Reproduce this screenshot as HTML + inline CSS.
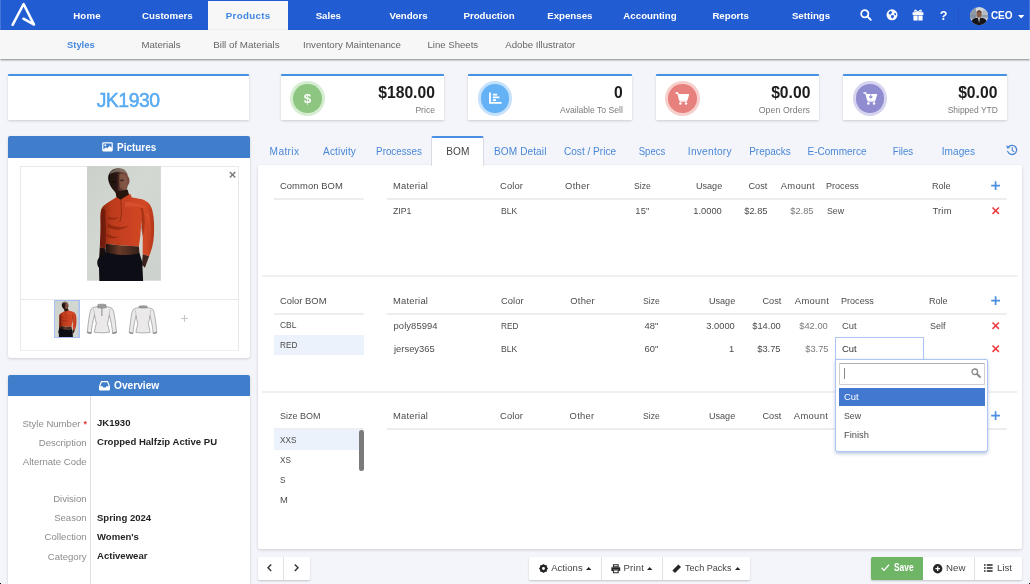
<!DOCTYPE html>
<html lang="en">
<head>
<meta charset="utf-8">
<title>JK1930 - Styles</title>
<style>
*{box-sizing:border-box;margin:0;padding:0}
html,body{width:1030px;height:584px;overflow:hidden}
body{position:relative;background:#f3f5fa;font-family:"Liberation Sans",Arial,Helvetica,sans-serif;font-size:9.6px;color:#444}
.t{position:absolute;white-space:nowrap;line-height:14px;height:14px}
.abs{position:absolute}
#nav{position:absolute;left:0;top:0;width:1030px;height:30px;background:#225cd2}
#subnav{position:absolute;left:0;top:30px;width:1030px;height:29px;background:#f7f7f7;box-shadow:0 1px 2px rgba(0,0,0,.46)}
#navtab{position:absolute;left:207.6px;top:0.8px;width:80.4px;height:29.4px;background:#f7f7f7}
.card{position:absolute;top:74px;height:46.2px;background:#fff;border-top:2px solid #4591e2;box-shadow:0 1px 2.500px rgba(0,0,0,.17);border-radius:1px}
.panel{position:absolute;background:#fff;box-shadow:0 1px 3px rgba(0,0,0,.16);border-radius:3px}
.phead{position:absolute;left:0;top:0;width:100%;background:#407dca;border-radius:3px 3px 0 0}
.hl{position:absolute}
.btn{position:absolute;top:556.6px;height:23.2px;background:#fff;box-shadow:0 1px 2px rgba(0,0,0,.2);border-radius:1.5px}
.vsep{position:absolute;top:0;width:1px;height:100%;background:#e2e2e2}
svg{position:absolute;overflow:visible}
#page{position:absolute;left:0;top:0;width:1030px;height:584px;filter:blur(0.5px)}
</style>
</head>
<body>
<div id="page">

<div id="nav">
<div id="navtab"></div>
<svg style="left:10px;top:2px" width="27" height="26" viewBox="0 0 27 26"><path d="M2.600 22.800 L13.600 2 L24 22.600 L13.400 16.700" fill="none" stroke="#fff" stroke-width="2.500" stroke-linecap="round" stroke-linejoin="round"/></svg>
<span class="t" style="top:9.40px;font-size:9.7px;color:#fff;font-weight:700;letter-spacing:0.2px;left:-13.00px;width:200px;text-align:center;">Home</span>
<span class="t" style="top:9.40px;font-size:9.7px;color:#fff;font-weight:700;left:67.40px;width:200px;text-align:center;">Customers</span>
<span class="t" style="top:9.40px;font-size:9.7px;color:#3f86df;font-weight:700;letter-spacing:0.35px;left:148.18px;width:200px;text-align:center;">Products</span>
<span class="t" style="top:9.40px;font-size:9.7px;color:#fff;font-weight:700;left:228.30px;width:200px;text-align:center;">Sales</span>
<span class="t" style="top:9.40px;font-size:9.7px;color:#fff;font-weight:700;left:308.60px;width:200px;text-align:center;">Vendors</span>
<span class="t" style="top:9.40px;font-size:9.7px;color:#fff;font-weight:700;left:389.00px;width:200px;text-align:center;">Production</span>
<span class="t" style="top:9.40px;font-size:9.7px;color:#fff;font-weight:700;left:469.80px;width:200px;text-align:center;">Expenses</span>
<span class="t" style="top:9.40px;font-size:9.7px;color:#fff;font-weight:700;left:550.00px;width:200px;text-align:center;">Accounting</span>
<span class="t" style="top:9.40px;font-size:9.7px;color:#fff;font-weight:700;left:630.70px;width:200px;text-align:center;">Reports</span>
<span class="t" style="top:9.40px;font-size:9.7px;color:#fff;font-weight:700;left:711.00px;width:200px;text-align:center;">Settings</span>
<svg style="left:860px;top:9.200px" width="12" height="12" viewBox="0 0 12 12"><circle cx="4.800" cy="4.800" r="3.600" fill="none" stroke="#fff" stroke-width="1.800"/><path d="M7.500 7.500 L10.800 10.800" stroke="#fff" stroke-width="1.800" stroke-linecap="round"/></svg>
<svg style="left:886px;top:8.600px" width="12" height="12" viewBox="0 0 12 12"><circle cx="6" cy="5.800" r="5.500" fill="#fff"/><path d="M2.600 3.400 L4.800 1.800 L6.200 3.200 L4.800 5.400 L3 5.600 Z M5 6.400 L7.600 6 L8 7.800 L6.400 9.800 L5 8.200 Z M8.400 3.800 L10.200 4.400 L10 6.400 L8.400 5.800 Z" fill="#225cd2"/></svg>
<svg style="left:912px;top:8.700px" width="12" height="12" viewBox="0 0 12 12"><path d="M0.600 3.200 H11.400 V6 H0.600 Z M1.400 6.600 H10.600 V11.600 H1.400 Z" fill="#fff"/><path d="M6 3.400 C4.600 0.200 1.800 0.600 2.600 2.600 C3 3.400 4.600 3.400 6 3.400 C7.400 3.400 9 3.400 9.400 2.600 C10.200 0.600 7.400 0.200 6 3.400 Z" fill="#fff" stroke="#fff" stroke-width="0.800"/><circle cx="4" cy="2.300" r="0.550" fill="#225cd2"/><circle cx="8" cy="2.300" r="0.550" fill="#225cd2"/><path d="M6 6.200 V11.600" stroke="#225cd2" stroke-width="0.900" opacity="0.800"/></svg>
<span class="t" style="top:9.00px;font-size:12.5px;color:#fff;font-weight:700;left:843.50px;width:200px;text-align:center;">?</span>
<div class="abs" style="left:958.3px;top:7px;width:1px;height:17px;background:#2054c6"></div>
<svg style="left:969.800px;top:6.800px" width="18.200" height="18.200" viewBox="0 0 18.4 18.4"><defs><clipPath id="av"><circle cx="9.200" cy="9.200" r="9.200"/></clipPath></defs><g clip-path="url(#av)"><rect width="18.400" height="18.400" fill="#d3d8de"/><rect x="0" y="0" width="6" height="12" fill="#8e99a8"/><rect x="12.600" y="3" width="5.800" height="9" fill="#b4bcc6"/><rect x="0" y="8" width="18.400" height="2.500" fill="#7d8896" opacity="0.600"/><path d="M0.500 18.400 C0.500 12.600 4 10.800 9.200 10.800 C14.400 10.800 17.900 12.600 17.900 18.400 Z" fill="#17171b"/><path d="M8 11.200 L9.200 16 L10.400 11.200 Z" fill="#cfcfd4"/><path d="M8.900 12 L9.200 16.500 L9.500 12 Z" fill="#333"/><ellipse cx="9.200" cy="6.900" rx="2.700" ry="3.600" fill="#8a5c46"/><path d="M6.500 6 C6.500 2.600 11.900 2.600 11.900 6 C11 4.700 7.400 4.700 6.500 6 Z" fill="#5a4238"/></g></svg>
<span class="t" style="top:9.00px;font-size:10px;color:#fff;font-weight:700;left:990.90px;">CEO</span>
<svg style="left:1017.700px;top:14.600px" width="6.400" height="3.600" viewBox="0 0 6.4 3.6"><path d="M0 0 H6.400 L3.200 3.600 Z" fill="#fff"/></svg>
</div>
<div id="subnav"></div>
<span class="t" style="top:38.20px;font-size:9.4px;color:#4488dc;font-weight:700;left:-19.20px;width:200px;text-align:center;">Styles</span>
<span class="t" style="top:38.20px;font-size:9.6px;color:#676767;left:61.00px;width:200px;text-align:center;">Materials</span>
<span class="t" style="top:38.20px;font-size:9.8px;color:#676767;left:146.40px;width:200px;text-align:center;">Bill of Materials</span>
<span class="t" style="top:38.20px;font-size:9.7px;color:#676767;left:252.00px;width:200px;text-align:center;">Inventory Maintenance</span>
<span class="t" style="top:38.20px;font-size:9.6px;color:#676767;left:352.80px;width:200px;text-align:center;">Line Sheets</span>
<span class="t" style="top:38.20px;font-size:9.6px;color:#676767;left:440.30px;width:200px;text-align:center;">Adobe Illustrator</span>
<div class="card" style="left:8.2px;width:241px"></div>
<span class="t" style="top:88.10px;font-size:19.4px;color:#58aaf2;line-height:24px;height:24px;letter-spacing:-0.45px;left:28.18px;width:200px;text-align:center;-webkit-text-stroke:0.5px #58aaf2;">JK1930</span>
<div class="card" style="left:280.8px;width:163.500px"></div>
<div class="abs" style="left:290.20px;top:81.30px;width:34.600px;height:34.600px;border-radius:50%;background:#d6edd2"></div>
<div class="abs" style="left:293.20px;top:84.30px;width:28.600px;height:28.600px;border-radius:50%;background:#8cc680"></div>
<span class="t" style="top:91.60px;font-size:13.5px;color:#fff;font-weight:700;left:207.50px;width:200px;text-align:center;">$</span>
<span class="t" style="top:82.90px;font-size:15.76px;color:#1c1c1c;line-height:20px;height:20px;font-weight:700;transform:scaleX(0.9963);transform-origin:100% 50%;right:595.00px;">$180.00</span>
<span class="t" style="top:102.70px;font-size:8.76px;color:#7a7a7a;transform:scaleX(0.9796);transform-origin:100% 50%;right:595.00px;">Price</span>
<div class="card" style="left:468.3px;width:163.500px"></div>
<div class="abs" style="left:477.70px;top:81.30px;width:34.600px;height:34.600px;border-radius:50%;background:#c5e1fc"></div>
<div class="abs" style="left:480.70px;top:84.30px;width:28.600px;height:28.600px;border-radius:50%;background:#64b1f5"></div>
<svg style="left:488.60px;top:92.40px" width="13" height="12" viewBox="0 0 13 12"><path d="M1 0.400 V10.800 H12.600" fill="none" stroke="#fff" stroke-width="1.800"/><path d="M3.800 2.600 H8.200 M3.800 5.400 H10.400 M3.800 8.100 H7" stroke="#fff" stroke-width="1.800"/></svg>
<span class="t" style="top:82.90px;font-size:15.76px;color:#1c1c1c;line-height:20px;height:20px;font-weight:700;transform:scaleX(0.9963);transform-origin:100% 50%;right:407.50px;">0</span>
<span class="t" style="top:102.70px;font-size:8.76px;color:#7a7a7a;transform:scaleX(0.9836);transform-origin:100% 50%;right:407.50px;">Available To Sell</span>
<div class="card" style="left:655.8px;width:163.500px"></div>
<div class="abs" style="left:665.20px;top:81.30px;width:34.600px;height:34.600px;border-radius:50%;background:#f7d0ce"></div>
<div class="abs" style="left:668.20px;top:84.30px;width:28.600px;height:28.600px;border-radius:50%;background:#e7817e"></div>
<svg style="left:675.10px;top:92.00px" width="14.500" height="13" viewBox="0 0 14.5 13"><path d="M0.400 0.900 H2.800 L4.600 8.200 H11.800 L13.600 2.600 H3.400" fill="#fff" stroke="#fff" stroke-width="1.200" stroke-linejoin="round"/><path d="M4.800 9.200 H12" stroke="#fff" stroke-width="1"/><circle cx="5.400" cy="11.400" r="1.250" fill="#fff"/><circle cx="11" cy="11.400" r="1.250" fill="#fff"/></svg>
<span class="t" style="top:82.90px;font-size:15.76px;color:#1c1c1c;line-height:20px;height:20px;font-weight:700;transform:scaleX(0.9963);transform-origin:100% 50%;right:220.00px;">$0.00</span>
<span class="t" style="top:102.70px;font-size:8.76px;color:#7a7a7a;letter-spacing:0.073px;right:219.93px;">Open Orders</span>
<div class="card" style="left:843.2px;width:163.500px"></div>
<div class="abs" style="left:852.60px;top:81.30px;width:34.600px;height:34.600px;border-radius:50%;background:#d6d4ee"></div>
<div class="abs" style="left:855.60px;top:84.30px;width:28.600px;height:28.600px;border-radius:50%;background:#908cd0"></div>
<svg style="left:862.50px;top:92.00px" width="14.500" height="13" viewBox="0 0 14.5 13"><path d="M0.400 0.900 H2.800 L4.600 8.200 H11.800 L13.600 2.600 H3.400" fill="#fff" stroke="#fff" stroke-width="1.200" stroke-linejoin="round"/><path d="M4.800 9.200 H12" stroke="#fff" stroke-width="1"/><circle cx="5.400" cy="11.400" r="1.250" fill="#fff"/><circle cx="11" cy="11.400" r="1.250" fill="#fff"/><path d="M7.800 2.400 V5.600 M6.200 4.400 L7.800 6 L9.400 4.400" stroke="#908cd0" stroke-width="1.100" fill="none"/></svg>
<span class="t" style="top:82.90px;font-size:15.76px;color:#1c1c1c;line-height:20px;height:20px;font-weight:700;transform:scaleX(0.9963);transform-origin:100% 50%;right:32.60px;">$0.00</span>
<span class="t" style="top:102.70px;font-size:8.76px;color:#7a7a7a;transform:scaleX(0.9682);transform-origin:100% 50%;right:32.60px;">Shipped YTD</span><div class="panel" style="left:8px;top:136.400px;width:242px;height:222px">
<div class="phead" style="height:21.500px;border-radius:2px 2px 0 0"></div>
<div class="abs" style="left:12px;top:29.600px;width:218.600px;height:184.600px;border:1px solid #e9e9e9;border-bottom-color:#f0f0f0;background:#fff"></div>
<div class="abs" style="left:12px;top:162.900px;width:218.600px;height:1px;background:#e9e9e9"></div>
</div>
<svg style="left:101.500px;top:141.800px" width="11" height="9.600" viewBox="0 0 11 9.6"><rect x="0.200" y="0.200" width="10.600" height="9.200" rx="1.300" fill="#fff"/><path d="M1.400 1.400 H9.600 V5.800 L7.600 3.800 L5.200 6.400 L4 5.200 L1.400 7.600 Z" fill="#407dca"/><circle cx="3.300" cy="3.200" r="0.950" fill="#fff"/></svg>
<span class="t" style="top:140.00px;font-size:11.3px;color:#fff;font-weight:700;left:116.90px;transform:scaleX(0.880);transform-origin:0 50%;">Pictures</span>
<span class="t" style="top:167.60px;font-size:13px;color:#7b7b7b;font-weight:700;left:132.60px;width:200px;text-align:center;">×</span>
<svg style="left:87.100px;top:166.200px;overflow:hidden" width="73.900" height="114.700" viewBox="0 0 74 115" preserveAspectRatio="none" overflow="hidden"><defs>
<linearGradient id="bga" x1="0" y1="0" x2="1" y2="1"><stop offset="0" stop-color="#cbd0cb"/><stop offset="0.45" stop-color="#d4d8d3"/><stop offset="1" stop-color="#cdd1cd"/></linearGradient>
<linearGradient id="tpa" x1="0" y1="0" x2="1" y2="0"><stop offset="0" stop-color="#86230b"/><stop offset="0.22" stop-color="#bd3b1d"/><stop offset="0.6" stop-color="#cd4323"/><stop offset="0.85" stop-color="#d24826"/><stop offset="1" stop-color="#b33516"/></linearGradient>
<linearGradient id="fca" x1="0" y1="0" x2="1" y2="0"><stop offset="0" stop-color="#1a100d"/><stop offset="0.4" stop-color="#2a1813"/><stop offset="0.62" stop-color="#6a4234"/><stop offset="1" stop-color="#7a4e3f"/></linearGradient>
<linearGradient id="mda" x1="0" y1="0" x2="1" y2="0"><stop offset="0" stop-color="#1d110d"/><stop offset="0.4" stop-color="#6a3a28"/><stop offset="1" stop-color="#33201a"/></linearGradient>
<filter id="bla" x="-10%" y="-10%" width="120%" height="120%"><feGaussianBlur stdDeviation="0.600"/></filter>
</defs>
<rect width="74" height="115" fill="url(#bga)"/>
<g filter="url(#bla)">
<path d="M21.200 13 C20.800 7 25 2.200 31.500 2.200 C37 2.200 40.500 5.500 41 10.500 C42.500 11.500 43 14.500 42.300 17 C41.800 18.500 41.200 19 40.800 19.200 C40.500 23 38 27 35 28.500 C33 29.500 31 29 29 27 C25.500 23.500 21.800 18.500 21.200 13 Z" fill="url(#fca)"/>
<path d="M22.500 8.500 C24 4.500 27.500 2.400 31.500 2.400 C35.500 2.400 39 4.500 40.200 8 C36 5 28 5.200 22.500 8.500 Z" fill="#8f8379" opacity="0.700"/>
<path d="M32.500 8.500 C35.500 7.200 39 8.500 40 12 C40.800 16 40 22 37.500 25.500 C35.800 27.200 34.200 27 33.400 25 C32.600 21 31.800 14 32.500 8.500 Z" fill="#946450" opacity="0.550"/>
<ellipse cx="26.800" cy="16" rx="2" ry="1" fill="#0c0706" opacity="0.700"/><ellipse cx="35" cy="14.400" rx="1.900" ry="0.900" fill="#22130f" opacity="0.750"/>
<ellipse cx="34" cy="23.300" rx="2" ry="1" fill="#5e372e"/>
<path d="M28.500 25.500 L40.600 23.500 L42.500 30 L34 35 L29.500 31.500 Z" fill="#28160f"/>
<path d="M29.500 31 L33.500 33.800 L43.200 27.800 L45 31.700 C50 32.500 54.500 33 58 34.500 C62 36.200 64.500 40 65.600 45 C67.200 52 67.600 61 67 70 C66.600 78 64.500 85 62.200 90.600 L55.800 88.600 L55.800 70.500 C55.400 66 55 60 54.500 55 L53.400 70 L52 80.600 C42 80.400 30 79.600 19 78 L18.600 82.600 L12.800 81.400 C13.200 73 13.600 65 13.400 56 C13.200 49 13.300 44 15.500 41 C18 37.800 24 35 29.500 31 Z" fill="url(#tpa)"/>
<path d="M14.500 43 C13.800 55 14.200 68 13.200 81.400 L18.600 82.600 C19.600 70 19 55 18 43 Z" fill="#4e1203" opacity="0.500"/>
<path d="M21 57.500 C27 61.500 34 62.500 42 60 C35 65.500 26 65 20 61 Z M21 51 C25 52.500 29 52.500 32 51 C29 54.500 24 54.500 21 53 Z M20 68 C24 70.500 28 71.500 32 71 C28 73.500 23 73 20 71 Z" fill="#7a1f08" opacity="0.550"/>
<path d="M55.800 42 C58.500 51 58.500 62 55.800 70.500 L54 62 C55.300 55 55.300 48 53.500 42 Z" fill="#7a1f08" opacity="0.450"/>
<path d="M33.800 34 L34.600 47 L33 56" stroke="#8e2a10" stroke-width="0.900" fill="none"/>
<path d="M38 36 C46 36 54 38 60 42 C54 40.500 46 40 38 41 Z M59 48 C62 55 63 65 62 76 C64 66 64 55 61.500 47 Z" fill="#e5633e" opacity="0.400"/>
<path d="M19 78 C30 79.600 42 80.400 52 80.600 L52.600 88.200 C42 90.700 30 90.200 18.400 86.800 Z" fill="url(#mda)"/>
<path d="M12.800 81.400 L18.600 82.600 L18.400 91 L12 94 Z" fill="#1c100c"/>
<path d="M55.800 88.600 L62.200 90.600 L58 102 L55 99 Z" fill="#3a221a"/>
<path d="M18.400 86.200 C30 89.800 42 90.400 52.600 87.600 L55.400 96.500 L56.300 118 L12.400 118 L12 102 C9.600 99 9.600 94.500 12.400 91.500 Z" fill="#0d0e12"/>
</g></svg>
<div class="abs" style="left:54.200px;top:299.700px;width:25.400px;height:38.500px;background:#a8c1f4"></div>
<svg style="left:55.100px;top:300.600px;overflow:hidden" width="23.600" height="36.700" viewBox="0 0 74 115" preserveAspectRatio="none" overflow="hidden"><defs>
<linearGradient id="bgb" x1="0" y1="0" x2="1" y2="1"><stop offset="0" stop-color="#cbd0cb"/><stop offset="0.45" stop-color="#d4d8d3"/><stop offset="1" stop-color="#cdd1cd"/></linearGradient>
<linearGradient id="tpb" x1="0" y1="0" x2="1" y2="0"><stop offset="0" stop-color="#86230b"/><stop offset="0.22" stop-color="#bd3b1d"/><stop offset="0.6" stop-color="#cd4323"/><stop offset="0.85" stop-color="#d24826"/><stop offset="1" stop-color="#b33516"/></linearGradient>
<linearGradient id="fcb" x1="0" y1="0" x2="1" y2="0"><stop offset="0" stop-color="#1a100d"/><stop offset="0.4" stop-color="#2a1813"/><stop offset="0.62" stop-color="#6a4234"/><stop offset="1" stop-color="#7a4e3f"/></linearGradient>
<linearGradient id="mdb" x1="0" y1="0" x2="1" y2="0"><stop offset="0" stop-color="#1d110d"/><stop offset="0.4" stop-color="#6a3a28"/><stop offset="1" stop-color="#33201a"/></linearGradient>
<filter id="blb" x="-10%" y="-10%" width="120%" height="120%"><feGaussianBlur stdDeviation="0.600"/></filter>
</defs>
<rect width="74" height="115" fill="url(#bgb)"/>
<g filter="url(#blb)">
<path d="M21.200 13 C20.800 7 25 2.200 31.500 2.200 C37 2.200 40.500 5.500 41 10.500 C42.500 11.500 43 14.500 42.300 17 C41.800 18.500 41.200 19 40.800 19.200 C40.500 23 38 27 35 28.500 C33 29.500 31 29 29 27 C25.500 23.500 21.800 18.500 21.200 13 Z" fill="url(#fcb)"/>
<path d="M22.500 8.500 C24 4.500 27.500 2.400 31.500 2.400 C35.500 2.400 39 4.500 40.200 8 C36 5 28 5.200 22.500 8.500 Z" fill="#8f8379" opacity="0.700"/>
<path d="M32.500 8.500 C35.500 7.200 39 8.500 40 12 C40.800 16 40 22 37.500 25.500 C35.800 27.200 34.200 27 33.400 25 C32.600 21 31.800 14 32.500 8.500 Z" fill="#946450" opacity="0.550"/>
<ellipse cx="26.800" cy="16" rx="2" ry="1" fill="#0c0706" opacity="0.700"/><ellipse cx="35" cy="14.400" rx="1.900" ry="0.900" fill="#22130f" opacity="0.750"/>
<ellipse cx="34" cy="23.300" rx="2" ry="1" fill="#5e372e"/>
<path d="M28.500 25.500 L40.600 23.500 L42.500 30 L34 35 L29.500 31.500 Z" fill="#28160f"/>
<path d="M29.500 31 L33.500 33.800 L43.200 27.800 L45 31.700 C50 32.500 54.500 33 58 34.500 C62 36.200 64.500 40 65.600 45 C67.200 52 67.600 61 67 70 C66.600 78 64.500 85 62.200 90.600 L55.800 88.600 L55.800 70.500 C55.400 66 55 60 54.500 55 L53.400 70 L52 80.600 C42 80.400 30 79.600 19 78 L18.600 82.600 L12.800 81.400 C13.200 73 13.600 65 13.400 56 C13.200 49 13.300 44 15.500 41 C18 37.800 24 35 29.500 31 Z" fill="url(#tpb)"/>
<path d="M14.500 43 C13.800 55 14.200 68 13.200 81.400 L18.600 82.600 C19.600 70 19 55 18 43 Z" fill="#4e1203" opacity="0.500"/>
<path d="M21 57.500 C27 61.500 34 62.500 42 60 C35 65.500 26 65 20 61 Z M21 51 C25 52.500 29 52.500 32 51 C29 54.500 24 54.500 21 53 Z M20 68 C24 70.500 28 71.500 32 71 C28 73.500 23 73 20 71 Z" fill="#7a1f08" opacity="0.550"/>
<path d="M55.800 42 C58.500 51 58.500 62 55.800 70.500 L54 62 C55.300 55 55.300 48 53.500 42 Z" fill="#7a1f08" opacity="0.450"/>
<path d="M33.800 34 L34.600 47 L33 56" stroke="#8e2a10" stroke-width="0.900" fill="none"/>
<path d="M38 36 C46 36 54 38 60 42 C54 40.500 46 40 38 41 Z M59 48 C62 55 63 65 62 76 C64 66 64 55 61.500 47 Z" fill="#e5633e" opacity="0.400"/>
<path d="M19 78 C30 79.600 42 80.400 52 80.600 L52.600 88.200 C42 90.700 30 90.200 18.400 86.800 Z" fill="url(#mdb)"/>
<path d="M12.800 81.400 L18.600 82.600 L18.400 91 L12 94 Z" fill="#1c100c"/>
<path d="M55.800 88.600 L62.200 90.600 L58 102 L55 99 Z" fill="#3a221a"/>
<path d="M18.400 86.200 C30 89.800 42 90.400 52.600 87.600 L55.400 96.500 L56.300 118 L12.400 118 L12 102 C9.600 99 9.600 94.500 12.400 91.500 Z" fill="#0d0e12"/>
</g></svg>
<svg style="left:87.1px;top:303.7px" width="29.8" height="30" viewBox="0 0 30 30" preserveAspectRatio="none"><path d="M11 2.600 C8.500 3 6.200 3.400 5 4.200 C3.400 5.600 2.800 9 2.200 13 C1.400 18 0.700 23.500 0.300 28.600 L4.200 29.500 C4.600 24 5.800 17 7.600 11 C8 14 8.800 17 9.400 19.400 C8.800 22 7.800 25 7.300 28.200 C12 29 18 29 22.700 28.200 C22.200 25 21.200 22 20.600 19.400 C21.200 17 22 14 22.400 11 C24.200 17 25.400 24 25.800 29.500 L29.700 28.600 C29.300 23.500 28.600 18 27.800 13 C27.200 9 26.600 5.600 25 4.200 C23.800 3.400 21.500 3 19 2.600 Z" fill="#ebe9e9" stroke="#8f8f8f" stroke-width="0.700" stroke-linejoin="round"/><path d="M7.600 11 C7.400 8.500 7 6.500 6.400 5 M22.400 11 C22.600 8.500 23 6.500 23.600 5" fill="none" stroke="#a5a5a5" stroke-width="0.600"/><path d="M0.300 28.300 L4.200 29.200 M25.800 29.200 L29.700 28.300" stroke="#8a8a8a" stroke-width="1.400"/><path d="M11 0.600 C13 0 17 0 19 0.600 L19.400 3.600 C17 4.400 13 4.400 10.600 3.600 Z" fill="#9b9b9b" stroke="#777" stroke-width="0.500"/><path d="M15 4.200 V12" stroke="#7c7c7c" stroke-width="0.900"/></svg>
<svg style="left:128.9px;top:304.6px" width="28.1" height="29.1" viewBox="0 0 30 30" preserveAspectRatio="none"><path d="M11 2.600 C8.500 3 6.200 3.400 5 4.200 C3.400 5.600 2.800 9 2.200 13 C1.400 18 0.700 23.500 0.300 28.600 L4.200 29.500 C4.600 24 5.800 17 7.600 11 C8 14 8.800 17 9.400 19.400 C8.800 22 7.800 25 7.300 28.200 C12 29 18 29 22.700 28.200 C22.200 25 21.200 22 20.600 19.400 C21.200 17 22 14 22.400 11 C24.200 17 25.400 24 25.800 29.500 L29.700 28.600 C29.300 23.500 28.600 18 27.800 13 C27.200 9 26.600 5.600 25 4.200 C23.800 3.400 21.500 3 19 2.600 Z" fill="#ebe9e9" stroke="#8f8f8f" stroke-width="0.700" stroke-linejoin="round"/><path d="M7.600 11 C7.400 8.500 7 6.500 6.400 5 M22.400 11 C22.600 8.500 23 6.500 23.600 5" fill="none" stroke="#a5a5a5" stroke-width="0.600"/><path d="M0.300 28.300 L4.200 29.200 M25.800 29.200 L29.700 28.300" stroke="#8a8a8a" stroke-width="1.400"/><path d="M10.600 1.200 C13 0.500 17 0.500 19.400 1.200 L19.200 2.900 C17 3.300 13 3.300 10.800 2.900 Z" fill="#9b9b9b" stroke="#777" stroke-width="0.500"/></svg>
<svg style="left:181.400px;top:314.900px" width="7" height="7" viewBox="0 0 7 7"><path d="M3.500 0 V7 M0 3.500 H7" stroke="#c6c6c6" stroke-width="1.100"/></svg>
<div class="panel" style="left:8px;top:374.600px;width:242px;height:220px">
<div class="phead" style="height:21.500px;border-radius:2px 2px 0 0"></div>
<div class="abs" style="left:82.300px;top:21.500px;width:1px;height:200px;background:#e1e1e1"></div>
</div>
<svg style="left:98.800px;top:380.900px" width="11" height="9.600" viewBox="0 0 11 9.6"><path d="M2.400 0.700 H8.600 L10.400 5.200 V8.200 Q10.400 8.900 9.700 8.900 H1.300 Q0.600 8.900 0.600 8.200 V5.200 Z" fill="none" stroke="#fff" stroke-width="1.200" stroke-linejoin="round"/><path d="M0.600 5.200 H3.600 L4.300 6.500 H6.700 L7.400 5.200 H10.400 V8.900 H0.600 Z" fill="#fff"/></svg>
<span class="t" style="top:378.40px;font-size:11.3px;color:#fff;font-weight:700;left:113.80px;transform:scaleX(0.900);transform-origin:0 50%;">Overview</span>
<span class="t" style="top:416.80px;font-size:9.57px;color:#8c8c8c;right:949.60px;">Style Number</span>
<span class="t" style="top:416.60px;font-size:9px;color:#e03a3a;font-weight:700;left:-14.80px;width:200px;text-align:center;">*</span>
<span class="t" style="top:416.20px;font-size:9.55px;color:#242424;font-weight:700;left:97.00px;">JK1930</span>
<span class="t" style="top:435.90px;font-size:9.57px;color:#8c8c8c;right:943.40px;">Description</span>
<span class="t" style="top:435.30px;font-size:9.55px;color:#242424;font-weight:700;left:97.00px;">Cropped Halfzip Active PU</span>
<span class="t" style="top:455.20px;font-size:9.57px;color:#8c8c8c;right:943.40px;">Alternate Code</span>
<span class="t" style="top:492.40px;font-size:9.57px;color:#8c8c8c;right:943.40px;">Division</span>
<span class="t" style="top:511.20px;font-size:9.57px;color:#8c8c8c;right:943.40px;">Season</span>
<span class="t" style="top:510.60px;font-size:9.55px;color:#242424;font-weight:700;left:97.00px;">Spring 2024</span>
<span class="t" style="top:530.40px;font-size:9.57px;color:#8c8c8c;right:943.40px;">Collection</span>
<span class="t" style="top:529.80px;font-size:9.55px;color:#242424;font-weight:700;left:97.00px;">Women's</span>
<span class="t" style="top:549.60px;font-size:9.57px;color:#8c8c8c;right:943.40px;">Category</span>
<span class="t" style="top:549.00px;font-size:9.55px;color:#242424;font-weight:700;left:97.00px;">Activewear</span><div class="panel" style="left:257.600px;top:165.400px;width:764.400px;height:383.300px;border-radius:2px;box-shadow:0 1px 3px rgba(0,0,0,.17)"></div>
<div class="abs" style="left:431.200px;top:135.700px;width:53.200px;height:30.700px;background:#fff;border-top:2px solid #4a8fe1;border-left:1px solid #d9dce4;border-right:1px solid #d9dce4;border-radius:2px 2px 0 0"></div>
<span class="t" style="top:144.70px;font-size:10.12px;color:#4a87d6;letter-spacing:0.364px;left:184.48px;width:200px;text-align:center;">Matrix</span>
<span class="t" style="top:144.70px;font-size:10.12px;color:#4a87d6;letter-spacing:0.118px;left:239.56px;width:200px;text-align:center;">Activity</span>
<span class="t" style="top:144.70px;font-size:10.12px;color:#4a87d6;transform:scaleX(0.9708);transform-origin:50% 50%;left:298.80px;width:200px;text-align:center;">Processes</span>
<span class="t" style="top:144.70px;font-size:10.12px;color:#444;letter-spacing:0.019px;left:357.81px;width:200px;text-align:center;">BOM</span>
<span class="t" style="top:144.70px;font-size:10.12px;color:#4a87d6;letter-spacing:0.078px;left:420.24px;width:200px;text-align:center;">BOM Detail</span>
<span class="t" style="top:144.70px;font-size:10.12px;color:#4a87d6;transform:scaleX(0.9962);transform-origin:50% 50%;left:489.50px;width:200px;text-align:center;">Cost / Price</span>
<span class="t" style="top:144.70px;font-size:10.12px;color:#4a87d6;transform:scaleX(0.9437);transform-origin:50% 50%;left:551.80px;width:200px;text-align:center;">Specs</span>
<span class="t" style="top:144.70px;font-size:10.12px;color:#4a87d6;letter-spacing:0.266px;left:609.83px;width:200px;text-align:center;">Inventory</span>
<span class="t" style="top:144.70px;font-size:10.12px;color:#4a87d6;transform:scaleX(0.9872);transform-origin:50% 50%;left:669.90px;width:200px;text-align:center;">Prepacks</span>
<span class="t" style="top:144.70px;font-size:10.12px;color:#4a87d6;transform:scaleX(0.9918);transform-origin:50% 50%;left:737.40px;width:200px;text-align:center;">E-Commerce</span>
<span class="t" style="top:144.70px;font-size:10.12px;color:#4a87d6;transform:scaleX(0.9564);transform-origin:50% 50%;left:803.10px;width:200px;text-align:center;">Files</span>
<span class="t" style="top:144.70px;font-size:10.12px;color:#4a87d6;letter-spacing:0.009px;left:858.40px;width:200px;text-align:center;">Images</span>
<svg style="left:1006.200px;top:144.200px" width="12" height="12" viewBox="0 0 12 12"><path d="M2.300 3.200 A4.600 4.600 0 1 1 1.700 7.400" fill="none" stroke="#4a87d6" stroke-width="1.300" stroke-linecap="round"/><path d="M0.500 1 L0.900 4.500 L4.300 4 Z" fill="#4a87d6"/><path d="M6.200 3.600 V6.400 L8 7.600" fill="none" stroke="#4a87d6" stroke-width="1.100" stroke-linecap="round"/></svg>
<span class="t" style="top:179.00px;font-size:9.41px;color:#4c4c4c;letter-spacing:0.086px;left:279.90px;">Common BOM</span>
<svg style="left:274px;top:197.20px" width="89.6" height="4" viewBox="0 0 89.6 4"><rect x="0" y="1.20" width="89.6" height="1.6" fill="#e9e9e9"/></svg>
<svg style="left:387px;top:197.20px" width="619.5" height="4" viewBox="0 0 619.5 4"><rect x="0" y="1.20" width="619.5" height="1.6" fill="#e9e9e9"/></svg>
<span class="t" style="top:179.00px;font-size:9.41px;color:#4c4c4c;letter-spacing:0.207px;left:393.00px;">Material</span>
<span class="t" style="top:179.00px;font-size:9.41px;color:#4c4c4c;letter-spacing:0.072px;left:500.10px;">Color</span>
<span class="t" style="top:179.00px;font-size:9.41px;color:#4c4c4c;letter-spacing:0.256px;left:565.10px;">Other</span>
<span class="t" style="top:179.00px;font-size:9.41px;color:#4c4c4c;transform:scaleX(0.914);transform-origin:0 50%;left:634.10px;">Size</span>
<span class="t" style="top:179.00px;font-size:9.41px;color:#4c4c4c;transform:scaleX(0.9644);transform-origin:100% 50%;right:308.20px;">Usage</span>
<span class="t" style="top:179.00px;font-size:9.41px;color:#4c4c4c;transform:scaleX(0.9754);transform-origin:100% 50%;right:262.40px;">Cost</span>
<span class="t" style="top:179.00px;font-size:9.41px;color:#4c4c4c;letter-spacing:0.304px;right:215.00px;">Amount</span>
<span class="t" style="top:179.00px;font-size:9.41px;color:#4c4c4c;transform:scaleX(0.964);transform-origin:0 50%;left:826.40px;">Process</span>
<span class="t" style="top:179.00px;font-size:9.41px;color:#4c4c4c;transform:scaleX(0.9616);transform-origin:0 50%;left:931.60px;">Role</span>
<svg style="left:991.300px;top:180.7px" width="9.200" height="9.200" viewBox="0 0 9.2 9.200"><path d="M4.600 0.200 V9 M0.200 4.600 H9" stroke="#4a8fe0" stroke-width="1.700"/></svg>
<span class="t" style="top:203.80px;font-size:9.41px;color:#4c4c4c;transform:scaleX(0.9306);transform-origin:0 50%;left:393.20px;">ZIP1</span>
<span class="t" style="top:203.80px;font-size:9.41px;color:#4c4c4c;transform:scaleX(0.9151);transform-origin:0 50%;left:500.60px;">BLK</span>
<span class="t" style="top:203.80px;font-size:9.41px;color:#4c4c4c;letter-spacing:0.103px;left:635.30px;">15"</span>
<span class="t" style="top:203.80px;font-size:9.41px;color:#4c4c4c;transform:scaleX(0.9924);transform-origin:100% 50%;right:308.70px;">1.0000</span>
<span class="t" style="top:203.80px;font-size:9.41px;color:#4c4c4c;transform:scaleX(0.991);transform-origin:100% 50%;right:262.60px;">$2.85</span>
<span class="t" style="top:203.80px;font-size:9.41px;color:#7b7b7b;transform:scaleX(0.991);transform-origin:100% 50%;right:216.20px;">$2.85</span>
<span class="t" style="top:203.80px;font-size:9.41px;color:#4c4c4c;transform:scaleX(0.9325);transform-origin:0 50%;left:827.20px;">Sew</span>
<span class="t" style="top:203.80px;font-size:9.41px;color:#4c4c4c;letter-spacing:0.171px;left:932.50px;">Trim</span>
<svg style="left:991.900px;top:207.1px" width="7.400" height="7.400" viewBox="0 0 7.4 7.400"><path d="M0.500 0.500 L6.900 6.900 M6.900 0.500 L0.500 6.900" stroke="#ee3a3e" stroke-width="1.500"/></svg>
<svg style="left:262px;top:274.20px" width="755.5" height="4" viewBox="0 0 755.5 4"><rect x="0" y="1.25" width="755.5" height="1.5" fill="#ececec"/></svg>
<span class="t" style="top:293.90px;font-size:9.41px;color:#4c4c4c;transform:scaleX(0.9996);transform-origin:0 50%;left:279.90px;">Color BOM</span>
<svg style="left:274px;top:312.20px" width="89.6" height="4" viewBox="0 0 89.6 4"><rect x="0" y="1.20" width="89.6" height="1.6" fill="#e9e9e9"/></svg>
<svg style="left:387px;top:312.20px" width="619.5" height="4" viewBox="0 0 619.5 4"><rect x="0" y="1.20" width="619.5" height="1.6" fill="#e9e9e9"/></svg>
<span class="t" style="top:293.90px;font-size:9.41px;color:#4c4c4c;letter-spacing:0.207px;left:393.00px;">Material</span>
<span class="t" style="top:293.90px;font-size:9.41px;color:#4c4c4c;letter-spacing:0.072px;left:500.90px;">Color</span>
<span class="t" style="top:293.90px;font-size:9.41px;color:#4c4c4c;letter-spacing:0.256px;left:570.20px;">Other</span>
<span class="t" style="top:293.90px;font-size:9.41px;color:#4c4c4c;transform:scaleX(0.914);transform-origin:0 50%;left:643.40px;">Size</span>
<span class="t" style="top:293.90px;font-size:9.41px;color:#4c4c4c;transform:scaleX(0.9644);transform-origin:100% 50%;right:294.60px;">Usage</span>
<span class="t" style="top:293.90px;font-size:9.41px;color:#4c4c4c;transform:scaleX(0.9754);transform-origin:100% 50%;right:248.20px;">Cost</span>
<span class="t" style="top:293.90px;font-size:9.41px;color:#4c4c4c;letter-spacing:0.304px;right:200.90px;">Amount</span>
<span class="t" style="top:293.90px;font-size:9.41px;color:#4c4c4c;transform:scaleX(0.964);transform-origin:0 50%;left:840.80px;">Process</span>
<span class="t" style="top:293.90px;font-size:9.41px;color:#4c4c4c;transform:scaleX(0.9616);transform-origin:0 50%;left:929.40px;">Role</span>
<svg style="left:991.300px;top:295.5px" width="9.200" height="9.200" viewBox="0 0 9.2 9.200"><path d="M4.600 0.200 V9 M0.200 4.600 H9" stroke="#4a8fe0" stroke-width="1.700"/></svg>
<span class="t" style="top:318.00px;font-size:9.41px;color:#4c4c4c;transform:scaleX(0.8977);transform-origin:0 50%;left:279.90px;">CBL</span>
<div class="abs" style="left:274px;top:335.100px;width:89.600px;height:19.800px;background:#ebf2fb"></div>
<span class="t" style="top:338.00px;font-size:9.41px;color:#4c4c4c;transform:scaleX(0.8756);transform-origin:0 50%;left:279.90px;">RED</span>
<span class="t" style="top:318.80px;font-size:9.41px;color:#4c4c4c;letter-spacing:0.082px;left:393.50px;">poly85994</span>
<span class="t" style="top:318.80px;font-size:9.41px;color:#4c4c4c;transform:scaleX(0.8756);transform-origin:0 50%;left:501.40px;">RED</span>
<span class="t" style="top:318.80px;font-size:9.41px;color:#4c4c4c;letter-spacing:0.103px;left:644.40px;">48"</span>
<span class="t" style="top:318.80px;font-size:9.41px;color:#4c4c4c;transform:scaleX(0.9924);transform-origin:100% 50%;right:295.40px;">3.0000</span>
<span class="t" style="top:318.80px;font-size:9.41px;color:#4c4c4c;transform:scaleX(0.9924);transform-origin:100% 50%;right:249.00px;">$14.00</span>
<span class="t" style="top:318.80px;font-size:9.41px;color:#7b7b7b;transform:scaleX(0.9924);transform-origin:100% 50%;right:201.80px;">$42.00</span>
<span class="t" style="top:318.80px;font-size:9.41px;color:#4c4c4c;transform:scaleX(0.9972);transform-origin:0 50%;left:841.60px;">Cut</span>
<span class="t" style="top:318.80px;font-size:9.41px;color:#4c4c4c;transform:scaleX(0.9592);transform-origin:0 50%;left:930.20px;">Self</span>
<svg style="left:991.900px;top:322.1px" width="7.400" height="7.400" viewBox="0 0 7.4 7.400"><path d="M0.500 0.500 L6.900 6.900 M6.900 0.500 L0.500 6.900" stroke="#ee3a3e" stroke-width="1.500"/></svg>
<span class="t" style="top:341.70px;font-size:9.41px;color:#4c4c4c;transform:scaleX(0.999);transform-origin:0 50%;left:393.50px;">jersey365</span>
<span class="t" style="top:341.70px;font-size:9.41px;color:#4c4c4c;transform:scaleX(0.9151);transform-origin:0 50%;left:501.40px;">BLK</span>
<span class="t" style="top:341.70px;font-size:9.41px;color:#4c4c4c;letter-spacing:0.103px;left:644.40px;">60"</span>
<span class="t" style="top:341.70px;font-size:9.41px;color:#4c4c4c;transform:scaleX(0.9986);transform-origin:100% 50%;right:295.40px;">1</span>
<span class="t" style="top:341.70px;font-size:9.41px;color:#4c4c4c;transform:scaleX(0.991);transform-origin:100% 50%;right:249.00px;">$3.75</span>
<span class="t" style="top:341.70px;font-size:9.41px;color:#7b7b7b;transform:scaleX(0.991);transform-origin:100% 50%;right:201.80px;">$3.75</span>
<svg style="left:991.900px;top:345.0px" width="7.400" height="7.400" viewBox="0 0 7.4 7.400"><path d="M0.500 0.500 L6.900 6.900 M6.900 0.500 L0.500 6.900" stroke="#ee3a3e" stroke-width="1.500"/></svg>
<svg style="left:262px;top:389.60px" width="755.5" height="4" viewBox="0 0 755.5 4"><rect x="0" y="1.25" width="755.5" height="1.5" fill="#ececec"/></svg>
<span class="t" style="top:409.00px;font-size:9.41px;color:#4c4c4c;transform:scaleX(0.9538);transform-origin:0 50%;left:279.90px;">Size BOM</span>
<svg style="left:274px;top:427.40px" width="89.6" height="4" viewBox="0 0 89.6 4"><rect x="0" y="1.20" width="89.6" height="1.6" fill="#e9e9e9"/></svg>
<svg style="left:387px;top:427.40px" width="619.5" height="4" viewBox="0 0 619.5 4"><rect x="0" y="1.20" width="619.5" height="1.6" fill="#e9e9e9"/></svg>
<span class="t" style="top:409.00px;font-size:9.41px;color:#4c4c4c;letter-spacing:0.207px;left:393.00px;">Material</span>
<span class="t" style="top:409.00px;font-size:9.41px;color:#4c4c4c;letter-spacing:0.072px;left:500.10px;">Color</span>
<span class="t" style="top:409.00px;font-size:9.41px;color:#4c4c4c;letter-spacing:0.256px;left:569.60px;">Other</span>
<span class="t" style="top:409.00px;font-size:9.41px;color:#4c4c4c;transform:scaleX(0.914);transform-origin:0 50%;left:643.20px;">Size</span>
<span class="t" style="top:409.00px;font-size:9.41px;color:#4c4c4c;transform:scaleX(0.9644);transform-origin:100% 50%;right:294.90px;">Usage</span>
<span class="t" style="top:409.00px;font-size:9.41px;color:#4c4c4c;transform:scaleX(0.9754);transform-origin:100% 50%;right:248.60px;">Cost</span>
<span class="t" style="top:409.00px;font-size:9.41px;color:#4c4c4c;letter-spacing:0.304px;right:201.90px;">Amount</span>
<span class="t" style="top:409.00px;font-size:9.41px;color:#4c4c4c;transform:scaleX(0.964);transform-origin:0 50%;left:840.80px;">Process</span>
<span class="t" style="top:409.00px;font-size:9.41px;color:#4c4c4c;transform:scaleX(0.9616);transform-origin:0 50%;left:929.40px;">Role</span>
<svg style="left:991.300px;top:410.7px" width="9.200" height="9.200" viewBox="0 0 9.2 9.200"><path d="M4.600 0.200 V9 M0.200 4.600 H9" stroke="#4a8fe0" stroke-width="1.700"/></svg>
<div class="abs" style="left:274px;top:429px;width:85.200px;height:20.600px;background:#ebf2fb"></div>
<div class="abs" style="left:359.100px;top:430.200px;width:4.500px;height:40.800px;background:#7b7b7b;border-radius:2.250px"></div>
<span class="t" style="top:432.80px;font-size:9.41px;color:#4c4c4c;transform:scaleX(0.87);transform-origin:0 50%;left:280.00px;">XXS</span>
<span class="t" style="top:453.00px;font-size:9.41px;color:#4c4c4c;transform:scaleX(0.87);transform-origin:0 50%;left:280.00px;">XS</span>
<span class="t" style="top:473.20px;font-size:9.41px;color:#4c4c4c;transform:scaleX(0.87);transform-origin:0 50%;left:280.00px;">S</span>
<span class="t" style="top:493.40px;font-size:9.41px;color:#4c4c4c;letter-spacing:0.413px;left:280.00px;">M</span>
<div class="abs" style="left:835px;top:337px;width:88.600px;height:23px;background:#fff;border:1px solid #adc5f2;border-bottom:none"></div>
<span class="t" style="top:341.70px;font-size:9.41px;color:#333;transform:scaleX(0.9972);transform-origin:0 50%;left:841.60px;">Cut</span>
<div class="abs" style="left:835px;top:359px;width:153px;height:92.500px;background:#fff;border:1px solid #adc5f2;border-radius:0 2px 3px 3px;box-shadow:0 1.500px 3.500px rgba(40,80,160,.3)">
<div class="abs" style="left:3px;top:3px;width:146px;height:22px;border:1px solid #d0d0d0;border-top-color:#b0b0b0;background:#fff;border-radius:1px"></div>
<div class="abs" style="left:7.600px;top:8px;width:1px;height:11px;background:#888"></div>
<svg style="left:135px;top:8.400px" width="10" height="10" viewBox="0 0 10 10"><circle cx="3.800" cy="3.800" r="2.800" fill="none" stroke="#8a8a8a" stroke-width="1.300"/><path d="M6 6 L9 9" stroke="#8a8a8a" stroke-width="1.900" stroke-linecap="round"/></svg>
<div class="abs" style="left:3px;top:28px;width:145.600px;height:18.400px;background:#4378d1"></div>
</div>
<span class="t" style="top:389.50px;font-size:9.41px;color:#fff;transform:scaleX(0.9972);transform-origin:0 50%;left:843.80px;">Cut</span>
<span class="t" style="top:408.70px;font-size:9.41px;color:#4c4c4c;transform:scaleX(0.9325);transform-origin:0 50%;left:843.80px;">Sew</span>
<span class="t" style="top:427.70px;font-size:9.41px;color:#4c4c4c;transform:scaleX(0.9928);transform-origin:0 50%;left:843.80px;">Finish</span>
<div class="btn" style="left:257.600px;width:52.600px"><div class="vsep" style="left:25.800px"></div></div>
<svg style="left:267.200px;top:564.200px" width="5" height="7.600" viewBox="0 0 5 7.600"><path d="M4.200 0.600 L1 3.800 L4.200 7" fill="none" stroke="#333" stroke-width="1.400"/></svg>
<svg style="left:293.600px;top:564.200px" width="5" height="7.600" viewBox="0 0 5 7.600"><path d="M0.800 0.600 L4 3.800 L0.800 7" fill="none" stroke="#333" stroke-width="1.400"/></svg>
<div class="btn" style="left:529px;width:220.800px"><div class="vsep" style="left:72.400px"></div><div class="vsep" style="left:133px"></div></div>
<svg style="left:538.500px;top:563.700px" width="9" height="9" viewBox="0 0 10 10"><circle cx="5" cy="5" r="3" fill="none" stroke="#262626" stroke-width="2.200"/><path d="M5 0.200 V9.800 M0.200 5 H9.800 M1.600 1.600 L8.400 8.400 M8.400 1.600 L1.600 8.400" stroke="#262626" stroke-width="1.700"/><circle cx="5" cy="5" r="1.600" fill="#fff"/></svg>
<span class="t" style="top:561.20px;font-size:9.53px;color:#444;letter-spacing:0.041px;left:551.20px;">Actions</span>
<svg style="left:585.700px;top:567.300px" width="5.400" height="3" viewBox="0 0 5.400 3"><path d="M0 3 H5.400 L2.700 0 Z" fill="#262626"/></svg>
<svg style="left:610.500px;top:563.500px" width="9.600" height="9.400" viewBox="0 0 10.400 10"><path d="M2.600 0.600 H7.800 V3 H2.600 Z" fill="none" stroke="#262626" stroke-width="1.100"/><path d="M0.400 3.400 H10 V7.600 H8.200 V6 H2.200 V7.600 H0.400 Z" fill="#262626"/><path d="M2.600 6.400 H7.800 V9.400 H2.600 Z" fill="none" stroke="#262626" stroke-width="1.100"/></svg>
<span class="t" style="top:561.20px;font-size:9.53px;color:#444;letter-spacing:0.206px;left:623.40px;">Print</span>
<svg style="left:647.400px;top:567.300px" width="5.400" height="3" viewBox="0 0 5.400 3"><path d="M0 3 H5.400 L2.700 0 Z" fill="#262626"/></svg>
<svg style="left:671.800px;top:563.700px" width="9.400" height="9.400" viewBox="0 0 10 10"><path d="M0.400 6.800 L6.800 0.400 L9.600 3.200 L3.200 9.600 Z" fill="#262626"/></svg>
<span class="t" style="top:561.20px;font-size:9.53px;color:#444;transform:scaleX(0.9548);transform-origin:0 50%;left:684.80px;">Tech Packs</span>
<svg style="left:735px;top:567.300px" width="5.400" height="3" viewBox="0 0 5.400 3"><path d="M0 3 H5.400 L2.700 0 Z" fill="#262626"/></svg>
<div class="btn" style="left:871px;width:151px"><div class="abs" style="left:0;top:0;width:52.200px;height:100%;background:#6fb566;border-radius:1.500px 0 0 1.500px"></div><div class="vsep" style="left:103.300px"></div></div>
<svg style="left:881px;top:564.300px" width="8.600" height="7.400" viewBox="0 0 8.600 7.400"><path d="M0.600 3.800 L3 6.400 L8 0.800" fill="none" stroke="#fff" stroke-width="1.300"/></svg>
<span class="t" style="top:561.00px;font-size:10.4px;color:#fff;font-weight:700;left:893.50px;transform:scaleX(0.810);transform-origin:0 50%;">Save</span>
<svg style="left:933px;top:563.600px" width="9.400" height="9.400" viewBox="0 0 9.400 9.400"><circle cx="4.700" cy="4.700" r="4.700" fill="#262626"/><path d="M4.700 2.400 V7 M2.400 4.700 H7" stroke="#fff" stroke-width="1.300"/></svg>
<span class="t" style="top:561.20px;font-size:9.68px;color:#444;letter-spacing:0.039px;left:946.00px;">New</span>
<svg style="left:984.400px;top:564.300px" width="8.600" height="8" viewBox="0 0 8.600 8"><path d="M0 1 H1.600 M0 4 H1.600 M0 7 H1.600" stroke="#262626" stroke-width="1.500"/><path d="M2.800 1 H8.600 M2.800 4 H8.600 M2.800 7 H8.600" stroke="#262626" stroke-width="1.300"/></svg>
<span class="t" style="top:561.20px;font-size:9.68px;color:#444;transform:scaleX(0.9997);transform-origin:0 50%;left:997.40px;">List</span>
<div class="abs" style="left:0;top:0;width:1px;height:584px;background:rgba(255,255,255,.16)"></div>
<div class="abs" style="left:1029px;top:0;width:1px;height:584px;background:rgba(255,255,255,.16)"></div>
<div class="abs" style="left:0;top:580.800px;width:3.200px;height:3.200px;background:radial-gradient(circle at 100% 0,rgba(0,0,0,0) 3px,#111 3.400px)"></div>
<div class="abs" style="left:1026.800px;top:580.800px;width:3.200px;height:3.200px;background:radial-gradient(circle at 0 0,rgba(0,0,0,0) 3px,#111 3.400px)"></div>
</div>
</body>
</html>
